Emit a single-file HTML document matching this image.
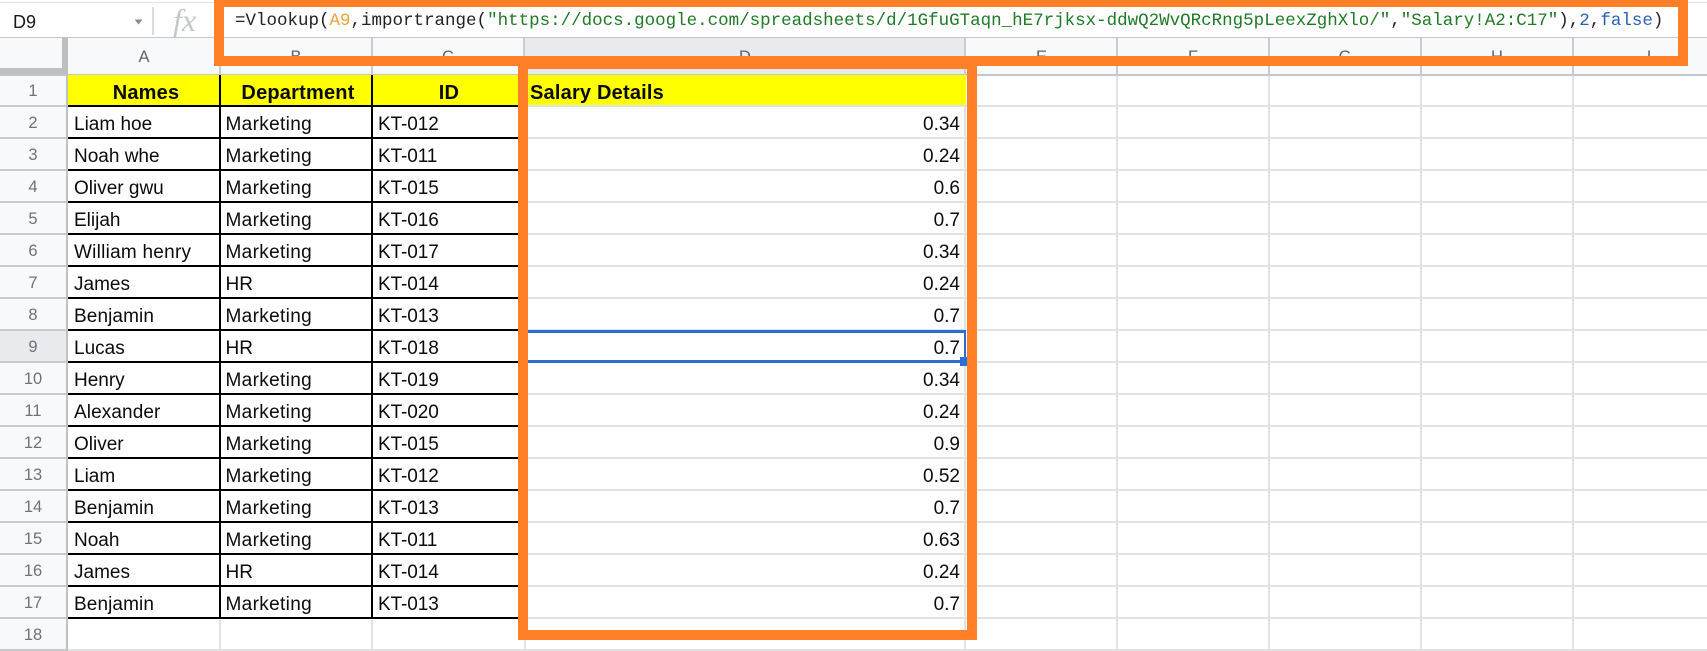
<!DOCTYPE html>
<html><head><meta charset="utf-8"><title>Sheet</title>
<style>
html,body{margin:0;padding:0;width:1707px;height:651px;overflow:hidden;background:#fff}
body{position:relative;font-family:"Liberation Sans",Arial,sans-serif;color:#0b0b0b}
div,span{position:absolute;white-space:nowrap}
.g{background:#e1e2e2}
.k{background:#000}
.r{left:0;width:1707px;height:32px}
.r span{top:3px;line-height:32px;font-size:19px}
.n{left:0!important;width:66px;text-align:center;color:#6f7276;font-size:16.5px!important;top:1px!important}
.a{left:74px}.b{left:225.5px;letter-spacing:.35px}.c{left:378px;letter-spacing:-.1px}
.v{right:747px}
.r .h{font-weight:bold;text-align:center;font-size:20px;letter-spacing:.2px}
.cl{top:38px;height:36px;line-height:38px;text-align:center;color:#5f6368;font-size:16.5px}
.o{background:#ff7f27}
</style></head><body>
<!-- formula bar -->
<div style="left:0;top:2px;width:1707px;height:1px;background:#e2e3e3"></div>
<div style="left:13px;top:8px;line-height:28px;font-size:18px;color:#1a1a1a">D9</div>
<svg style="position:absolute;left:134px;top:19px" width="9" height="6"><path d="M0.5 0.5H8.5L4.5 5.5Z" fill="#8a8c8f"/></svg>
<div style="left:152px;top:7px;width:2px;height:28px;background:#dadce0"></div>
<div style="left:173px;top:1px;line-height:38px;font-family:'Liberation Serif',serif;font-style:italic;font-size:32px;color:#c4c6c8">fx</div>
<div style="left:235px;top:8px;line-height:27px;font-family:'Liberation Mono',monospace;font-size:17.5px;color:#222">=Vlookup(<span style="position:static;color:#f0a23e">A9</span>,importrange(<span style="position:static;color:#1f7a26">"https://docs.google.com/spreadsheets/d/1GfuGTaqn_hE7rjksx-ddwQ2WvQRcRng5pLeexZghXlo/"</span>,<span style="position:static;color:#1f7a26">"Salary!A2:C17"</span>),<span style="position:static;color:#2a5fb8">2</span>,<span style="position:static;color:#2a5fb8">false</span>)</div>
<div style="left:0;top:37px;width:1707px;height:1px;background:#c4c6c8"></div>

<!-- column headers -->
<div style="left:0;top:38px;width:1707px;height:36px;background:#f8f9fa"></div>
<div style="left:524px;top:38px;width:440px;height:36px;background:#e8eaed"></div>
<div style="left:0;top:68px;width:62px;height:6px;background:#bdbfc1"></div>
<div style="left:62px;top:38px;width:6px;height:36px;background:#bdbfc1"></div>
<div style="left:0;top:74px;width:1707px;height:2px;background:#c4c6c8"></div>
<div style="left:219px;top:38px;width:2px;height:36px;background:#c9cbce"></div>
<div style="left:371px;top:38px;width:2px;height:36px;background:#c9cbce"></div>
<div style="left:523px;top:38px;width:2px;height:36px;background:#c9cbce"></div>
<div style="left:964px;top:38px;width:2px;height:36px;background:#c9cbce"></div>
<div style="left:1116px;top:38px;width:2px;height:36px;background:#c9cbce"></div>
<div style="left:1268px;top:38px;width:2px;height:36px;background:#c9cbce"></div>
<div style="left:1420px;top:38px;width:2px;height:36px;background:#c9cbce"></div>
<div style="left:1572px;top:38px;width:2px;height:36px;background:#c9cbce"></div>
<div class="cl" style="left:68px;width:152px">A</div>
<div class="cl" style="left:220px;width:152px">B</div>
<div class="cl" style="left:372px;width:152px">C</div>
<div class="cl" style="left:524px;width:442px">D</div>
<div class="cl" style="left:966px;width:151px">E</div>
<div class="cl" style="left:1117px;width:152px">F</div>
<div class="cl" style="left:1269px;width:152px">G</div>
<div class="cl" style="left:1421px;width:152px">H</div>
<div class="cl" style="left:1573px;width:134px;text-indent:18px">I</div>

<!-- row header background -->
<div style="left:0;top:76px;width:66px;height:575px;background:#f8f9fa"></div>
<div style="left:0;top:331px;width:66px;height:32px;background:#e8eaed"></div>
<div style="left:66px;top:76px;width:2px;height:575px;background:#c0c2c4"></div>

<!-- yellow header -->
<div style="left:68px;top:75px;width:898px;height:30px;background:#ffff00"></div>

<!-- grid verticals -->
<div class="g" style="left:524px;top:105px;width:2px;height:546px"></div>
<div class="g" style="left:964px;top:105px;width:2px;height:546px"></div>
<div class="g" style="left:1116px;top:76px;width:2px;height:575px"></div>
<div class="g" style="left:1268px;top:76px;width:2px;height:575px"></div>
<div class="g" style="left:1420px;top:76px;width:2px;height:575px"></div>
<div class="g" style="left:1572px;top:76px;width:2px;height:575px"></div>
<div class="g" style="left:219px;top:620px;width:2px;height:31px"></div>
<div class="g" style="left:371px;top:620px;width:2px;height:31px"></div>

<!-- grid horizontals (row lines) -->
<div class="g" style="left:520px;top:105px;width:1187px;height:2px"></div>
<div class="g" style="left:520px;top:137px;width:1187px;height:2px"></div>
<div class="g" style="left:520px;top:169px;width:1187px;height:2px"></div>
<div class="g" style="left:520px;top:201px;width:1187px;height:2px"></div>
<div class="g" style="left:520px;top:233px;width:1187px;height:2px"></div>
<div class="g" style="left:520px;top:265px;width:1187px;height:2px"></div>
<div class="g" style="left:520px;top:297px;width:1187px;height:2px"></div>
<div class="g" style="left:520px;top:329px;width:1187px;height:2px"></div>
<div class="g" style="left:520px;top:361px;width:1187px;height:2px"></div>
<div class="g" style="left:520px;top:393px;width:1187px;height:2px"></div>
<div class="g" style="left:520px;top:425px;width:1187px;height:2px"></div>
<div class="g" style="left:520px;top:457px;width:1187px;height:2px"></div>
<div class="g" style="left:520px;top:489px;width:1187px;height:2px"></div>
<div class="g" style="left:520px;top:521px;width:1187px;height:2px"></div>
<div class="g" style="left:520px;top:553px;width:1187px;height:2px"></div>
<div class="g" style="left:520px;top:585px;width:1187px;height:2px"></div>
<div class="g" style="left:520px;top:617px;width:1187px;height:2px"></div>
<div class="g" style="left:68px;top:649px;width:1639px;height:2px"></div>

<!-- black table borders -->
<div class="k" style="left:68px;top:105px;width:452px;height:2px"></div>
<div class="k" style="left:68px;top:137px;width:452px;height:2px"></div>
<div class="k" style="left:68px;top:169px;width:452px;height:2px"></div>
<div class="k" style="left:68px;top:201px;width:452px;height:2px"></div>
<div class="k" style="left:68px;top:233px;width:452px;height:2px"></div>
<div class="k" style="left:68px;top:265px;width:452px;height:2px"></div>
<div class="k" style="left:68px;top:297px;width:452px;height:2px"></div>
<div class="k" style="left:68px;top:329px;width:452px;height:2px"></div>
<div class="k" style="left:68px;top:361px;width:452px;height:2px"></div>
<div class="k" style="left:68px;top:393px;width:452px;height:2px"></div>
<div class="k" style="left:68px;top:425px;width:452px;height:2px"></div>
<div class="k" style="left:68px;top:457px;width:452px;height:2px"></div>
<div class="k" style="left:68px;top:489px;width:452px;height:2px"></div>
<div class="k" style="left:68px;top:521px;width:452px;height:2px"></div>
<div class="k" style="left:68px;top:553px;width:452px;height:2px"></div>
<div class="k" style="left:68px;top:585px;width:452px;height:2px"></div>
<div class="k" style="left:68px;top:617px;width:452px;height:2px"></div>
<div class="k" style="left:219px;top:75px;width:2px;height:544px"></div>
<div class="k" style="left:371px;top:75px;width:2px;height:544px"></div>

<!-- row header separators -->
<div style="left:0;top:105px;width:66px;height:520px;background:repeating-linear-gradient(to bottom,#c8cacc 0,#c8cacc 2px,transparent 2px,transparent 32px)"></div>
<div style="left:0;top:649px;width:66px;height:2px;background:#c8cacc"></div>

<!-- rows -->
<div class="r" style="top:74px"><span class="n">1</span><span class="h" style="left:70px;width:152px">Names</span><span class="h" style="left:222px;width:152px">Department</span><span class="h" style="left:373px;width:152px">ID</span><span class="h" style="left:530px">Salary Details</span></div>
<div class="r" style="top:106px"><span class="n">2</span><span class="a">Liam hoe</span><span class="b">Marketing</span><span class="c">KT-012</span><span class="v">0.34</span></div>
<div class="r" style="top:138px"><span class="n">3</span><span class="a">Noah whe</span><span class="b">Marketing</span><span class="c">KT-011</span><span class="v">0.24</span></div>
<div class="r" style="top:170px"><span class="n">4</span><span class="a">Oliver gwu</span><span class="b">Marketing</span><span class="c">KT-015</span><span class="v">0.6</span></div>
<div class="r" style="top:202px"><span class="n">5</span><span class="a">Elijah</span><span class="b">Marketing</span><span class="c">KT-016</span><span class="v">0.7</span></div>
<div class="r" style="top:234px"><span class="n">6</span><span class="a" style="letter-spacing:.25px">William henry</span><span class="b">Marketing</span><span class="c">KT-017</span><span class="v">0.34</span></div>
<div class="r" style="top:266px"><span class="n">7</span><span class="a">James</span><span class="b" style="letter-spacing:0">HR</span><span class="c">KT-014</span><span class="v">0.24</span></div>
<div class="r" style="top:298px"><span class="n">8</span><span class="a" style="letter-spacing:.1px">Benjamin</span><span class="b">Marketing</span><span class="c">KT-013</span><span class="v">0.7</span></div>
<div class="r" style="top:330px"><span class="n">9</span><span class="a">Lucas</span><span class="b" style="letter-spacing:0">HR</span><span class="c">KT-018</span><span class="v">0.7</span></div>
<div class="r" style="top:362px"><span class="n">10</span><span class="a">Henry</span><span class="b">Marketing</span><span class="c">KT-019</span><span class="v">0.34</span></div>
<div class="r" style="top:394px"><span class="n">11</span><span class="a" style="letter-spacing:.1px">Alexander</span><span class="b">Marketing</span><span class="c">KT-020</span><span class="v">0.24</span></div>
<div class="r" style="top:426px"><span class="n">12</span><span class="a">Oliver</span><span class="b">Marketing</span><span class="c">KT-015</span><span class="v">0.9</span></div>
<div class="r" style="top:458px"><span class="n">13</span><span class="a">Liam</span><span class="b">Marketing</span><span class="c">KT-012</span><span class="v">0.52</span></div>
<div class="r" style="top:490px"><span class="n">14</span><span class="a" style="letter-spacing:.1px">Benjamin</span><span class="b">Marketing</span><span class="c">KT-013</span><span class="v">0.7</span></div>
<div class="r" style="top:522px"><span class="n">15</span><span class="a">Noah</span><span class="b">Marketing</span><span class="c">KT-011</span><span class="v">0.63</span></div>
<div class="r" style="top:554px"><span class="n">16</span><span class="a">James</span><span class="b" style="letter-spacing:0">HR</span><span class="c">KT-014</span><span class="v">0.24</span></div>
<div class="r" style="top:586px"><span class="n">17</span><span class="a" style="letter-spacing:.1px">Benjamin</span><span class="b">Marketing</span><span class="c">KT-013</span><span class="v">0.7</span></div>
<div class="r" style="top:618px"><span class="n">18</span></div>

<!-- selection -->
<div style="left:528px;top:330px;width:436px;height:3px;background:#2a6fd6"></div>
<div style="left:528px;top:360px;width:436px;height:3px;background:#2a6fd6"></div>
<div style="left:964px;top:330px;width:2px;height:33px;background:#2a6fd6"></div>
<div style="left:960px;top:357px;width:7px;height:9px;background:#2a6fd6"></div>

<!-- orange highlight boxes -->
<div class="o" style="left:214px;top:0;width:1474px;height:7px"></div>
<div class="o" style="left:214px;top:0;width:10px;height:66px"></div>
<div class="o" style="left:1678px;top:0;width:10px;height:66px"></div>
<div class="o" style="left:214px;top:56px;width:1474px;height:10px"></div>
<div class="o" style="left:518px;top:59px;width:459px;height:10px"></div>
<div class="o" style="left:518px;top:59px;width:10px;height:581px"></div>
<div class="o" style="left:967px;top:59px;width:10px;height:581px"></div>
<div class="o" style="left:518px;top:630px;width:459px;height:10px"></div>
</body></html>
